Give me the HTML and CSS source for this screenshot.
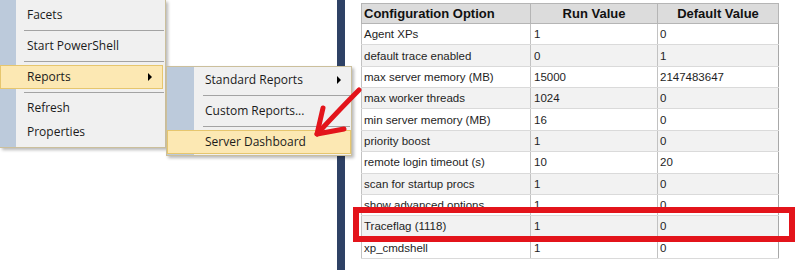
FILE: index.html
```html
<!DOCTYPE html>
<html lang="en">
<head>
<meta charset="utf-8">
<title>Server Dashboard</title>
<link rel="stylesheet" href="styles.css">
</head>
<body>
<div class="screen">
  <div class="explorer">
    <div class="menu menu-main">
      <div class="item">Facets</div>
      <div class="sep"></div>
      <div class="item">Start PowerShell</div>
      <div class="sep"></div>
      <div class="item hot">Reports<span class="arrow"></span></div>
      <div class="sep"></div>
      <div class="item">Refresh</div>
      <div class="item">Properties</div>
    </div>
    <div class="menu menu-sub">
      <div class="item">Standard Reports<span class="arrow"></span></div>
      <div class="sep"></div>
      <div class="item">Custom Reports...</div>
      <div class="sep"></div>
      <div class="item hot">Server Dashboard</div>
    </div>
  </div>
  <div class="splitter"></div>
  <div class="results">
    <table class="config">
      <colgroup><col class="c1"><col class="c2"><col class="c3"></colgroup>
      <thead>
        <tr><th>Configuration Option</th><th>Run Value</th><th>Default Value</th></tr>
      </thead>
      <tbody>
        <tr><td>Agent XPs</td><td>1</td><td>0</td></tr>
        <tr><td>default trace enabled</td><td>0</td><td>1</td></tr>
        <tr><td>max server memory (MB)</td><td>15000</td><td>2147483647</td></tr>
        <tr><td>max worker threads</td><td>1024</td><td>0</td></tr>
        <tr><td>min server memory (MB)</td><td>16</td><td>0</td></tr>
        <tr><td>priority boost</td><td>1</td><td>0</td></tr>
        <tr><td>remote login timeout (s)</td><td>10</td><td>20</td></tr>
        <tr><td>scan for startup procs</td><td>1</td><td>0</td></tr>
        <tr><td>show advanced options</td><td>1</td><td>0</td></tr>
        <tr><td>Traceflag (1118)</td><td>1</td><td>0</td></tr>
        <tr><td>xp_cmdshell</td><td>1</td><td>0</td></tr>
      </tbody>
    </table>
    <div class="mark-box"></div>
  </div>
  <svg class="mark-arrow" width="60" height="56" viewBox="0 0 60 56">
    <path d="M54 4 Q36 22 12 48" fill="none" stroke="#e3141b" stroke-width="5" stroke-linecap="round"/>
    <path d="M18 22 L12 48 L39 43" fill="none" stroke="#e3141b" stroke-width="5" stroke-linecap="round" stroke-linejoin="round"/>
  </svg>
</div>
</body>
</html>
```
FILE: styles.css
```css
* { box-sizing: border-box; }
html, body { margin: 0; padding: 0; }
body {
  background: #ffffff;
  width: 800px;
  height: 270px;
  overflow: hidden;
}
.screen {
  position: relative;
  display: flex;
  height: 270px;
}
.explorer {
  position: relative;
  width: 337px;
  flex: none;
  z-index: 2;
}
.splitter {
  width: 8px;
  flex: none;
  background: #2e4165;
}
.results {
  position: relative;
  flex: none;
  padding: 3px 0 0 16px;
}

/* context menus */
.menu {
  position: absolute;
  font-family: "Open Sans", "Noto Sans", sans-serif;
  font-size: 12px;
  color: #1b1b1b;
  border: 1px solid #cbbf9c;
  box-shadow: 2px 2px 3px rgba(0, 0, 0, 0.28);
}
.menu-main {
  left: 0;
  top: 0;
  width: 166px;
  padding: 3px 0;
  border-top: none;
  border-left: none;
  background: linear-gradient(to right, #bccadb 0 16px, #f0f0f0 16px);
}
.menu-sub {
  left: 166px;
  top: 66px;
  width: 186px;
  padding: 1px 0;
  background: linear-gradient(to right, #bccadb 0 27px, #f0f0f0 27px);
}
.item {
  position: relative;
  height: 24px;
  line-height: 22px;
  border: 1px solid transparent;
  padding-left: 26px;
  white-space: nowrap;
}
.menu-main .item { margin-right: 2px; }
.menu-sub .item { padding-left: 37px; }
.item.hot {
  background: #fce8b3;
  border-color: #e6c66e;
}
.sep {
  height: 1px;
  margin: 3px 1px 3px 24px;
  background: #a3a3a3;
}
.menu-sub .sep { margin-left: 36px; }
.arrow {
  position: absolute;
  right: 10px;
  top: 50%;
  margin-top: -4px;
  width: 0;
  height: 0;
  border-left: 4px solid #000;
  border-top: 4px solid transparent;
  border-bottom: 4px solid transparent;
}
.menu-sub .arrow { right: 9px; }

/* results grid */
.config {
  border-collapse: collapse;
  table-layout: fixed;
  width: 417px;
  font-family: "Liberation Sans", Arial, sans-serif;
  font-size: 11.5px;
  color: #1e1e1e;
  border: 1px solid #a8a8a8;
}
.c1 { width: 169px; }
.c2 { width: 127px; }
.c3 { width: 121px; }
.config th {
  height: 20px;
  padding: 0 2px;
  background: #dcdcdc;
  font-size: 13px;
  font-weight: bold;
  color: #111;
  border: 1px solid #b5b5b5;
  text-align: center;
  white-space: nowrap;
}
.config th:first-child { text-align: left; }
.config td {
  height: 21.36px;
  padding: 0 2px 0 2px;
  border-bottom: 1px solid #dadada;
  border-left: 1px solid #c2c2c2;
  white-space: nowrap;
  overflow: hidden;
}
.config td:nth-child(2) { padding-left: 3px; }
.config tbody tr:nth-child(even) td { background: #f2f2f2; }

/* annotations */
.mark-box {
  position: absolute;
  left: 8px;
  top: 207px;
  width: 442px;
  height: 35px;
  border: 6px solid #e3141b;
}
.mark-arrow {
  position: absolute;
  left: 305px;
  top: 86px;
  z-index: 3;
}
```
